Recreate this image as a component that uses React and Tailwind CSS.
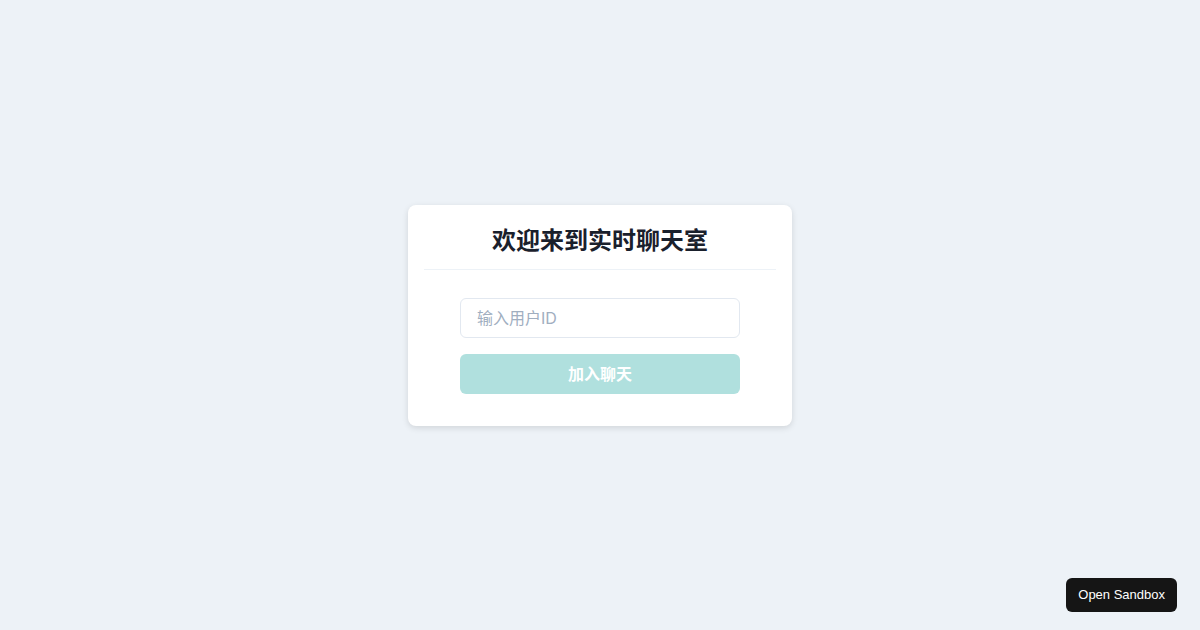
import React, { useState } from 'react';

const font = { fontFamily: '"Inter", "Noto Sans CJK SC", sans-serif' };

export default function App() {
    const [userId, setUserId] = useState('');

    return (
        <div className="relative w-full h-[630px] bg-[#edf2f7] flex items-center justify-center" style={font}>
            {/* login card */}
            <div className="w-[384px] bg-white rounded-lg shadow-[0_2px_6px_rgba(0,0,0,0.12)] px-4 pt-5 pb-8">
                <h1 className="text-center text-2xl font-bold text-[#1a202c] leading-8 pb-3 border-b border-[#edf2f7]">
                    欢迎来到实时聊天室
                </h1>
                <div className="flex flex-col items-center gap-4 mt-7">
                    <input
                        type="text"
                        value={userId}
                        onChange={(e) => setUserId(e.target.value)}
                        placeholder="输入用户ID"
                        className="w-[280px] h-10 px-4 text-base border border-[#e2e8f0] rounded-md outline-none placeholder:text-[#a0aec0]"
                    />
                    <button
                        disabled={!userId}
                        className="w-[280px] h-10 rounded-md bg-[#b0e0de] text-white text-base font-semibold"
                    >
                        加入聊天
                    </button>
                </div>
            </div>

            <button className="absolute right-[23px] bottom-[18px] h-[34px] px-3 rounded-md bg-[#151515] text-[13px] text-white" style={{ fontFamily: '"Liberation Sans", sans-serif' }}>
                Open Sandbox
            </button>
        </div>
    );
}
